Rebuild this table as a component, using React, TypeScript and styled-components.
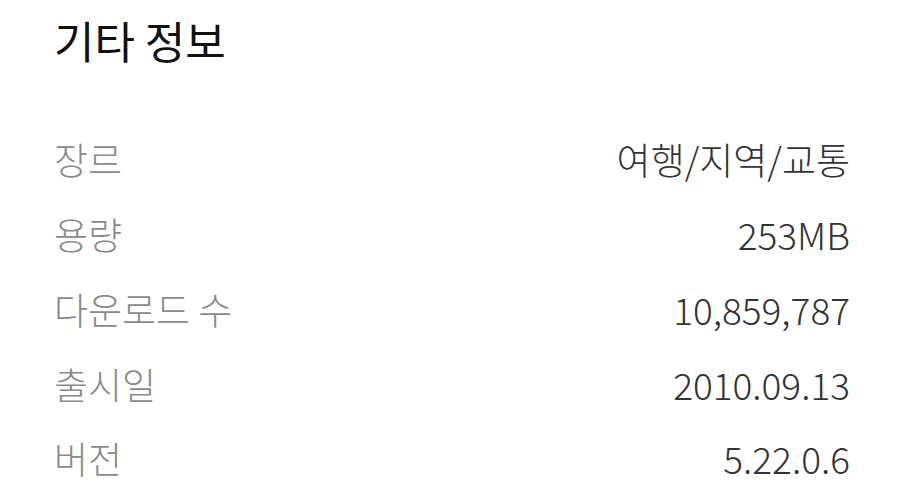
import React from "react";
import styled, { createGlobalStyle } from "styled-components";

const Global = createGlobalStyle`
  html, body { margin: 0; padding: 0; background: #ffffff; }
  body { font-family: "Noto Sans CJK KR", "Noto Sans", sans-serif; }
`;

const Section = styled.section`
  width: 904px;
  box-sizing: border-box;
  padding: 10px 54px 0 54px;
`;

const Title = styled.h2`
  margin: 0;
  font-size: 44px;
  font-weight: 400;
  line-height: 60px;
  color: #111111;
`;

const List = styled.dl`
  margin: 52px 0 0 0;
  display: flex;
  flex-direction: column;
`;

const Row = styled.div`
  display: flex;
  justify-content: space-between;
  align-items: center;
  height: 74.75px;
`;

const Label = styled.dt`
  margin: 0;
  font-size: 37px;
  font-weight: 300;
  color: #8a8a8a;
`;

const Value = styled.dd`
  margin: 0;
  font-size: 37px;
  font-weight: 300;
  color: #333333;
`;

const rows: [string, string][] = [
  ["장르", "여행/지역/교통"],
  ["용량", "253MB"],
  ["다운로드 수", "10,859,787"],
  ["출시일", "2010.09.13"],
  ["버전", "5.22.0.6"],
];

export default function App() {
  return (
    <>
      <Global />
      <Section>
        <Title>기타 정보</Title>
        <List>
          {rows.map(([k, v]) => (
            <Row key={k}>
              <Label>{k}</Label>
              <Value>{v}</Value>
            </Row>
          ))}
        </List>
      </Section>
    </>
  );
}
